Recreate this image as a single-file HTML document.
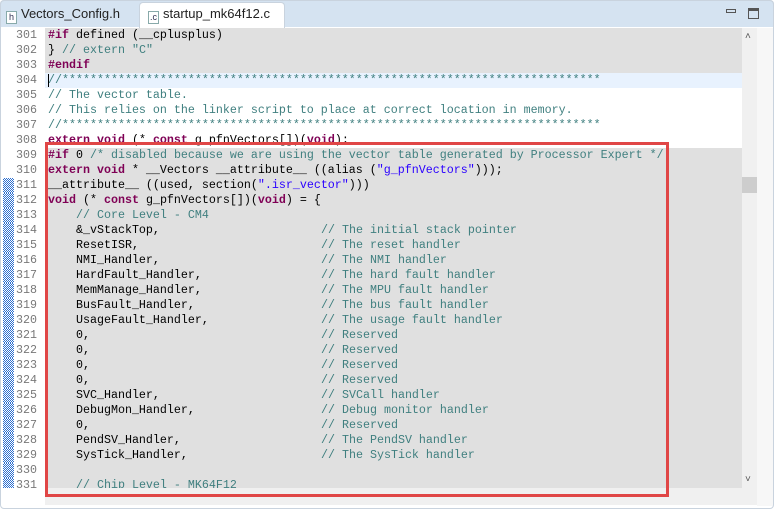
<!DOCTYPE html>
<html><head><style>
*{margin:0;padding:0;box-sizing:border-box}
body{width:774px;height:509px;background:#fff;position:relative;overflow:hidden;font-family:"Liberation Sans",sans-serif}
.tabbar{position:absolute;left:0;top:0;width:774px;height:27px;background:#d5e3f1;border:1px solid #c9d3de;border-bottom:none;border-radius:4px 4px 0 0}
.tab{position:absolute;top:3px;height:24px;font-size:13px;line-height:22px;color:#222}
.t1{left:6px}
.t2{left:139px;width:146px;background:#fff;border:1px solid #c9d3de;border-bottom:none;border-radius:4px 4px 0 0;padding-left:8px;top:2px;height:26px}
.ic{display:inline-block;width:11px;height:13px;border:1px solid #8aa;font-size:9px;line-height:11px;text-align:center;vertical-align:-2px;margin-right:4px;color:#335;background:#fff}
.gutter{position:absolute;left:0;top:28px;width:45px;height:460px;background:#fff}
.area{position:absolute;left:45px;top:28px;width:697px;height:460px;overflow:hidden;background:#fff}
.ln{position:absolute;left:0;width:37px;text-align:right;font-family:"Liberation Mono",monospace;font-size:11.67px;color:#787878;height:15px;line-height:15px}
.cb{position:absolute;left:3px;width:11px;height:15px;background:repeating-conic-gradient(#2d6fcf 0 25%,#fff 0 50%) 0 0/2px 2px}
.l{position:absolute;left:0;width:697px;height:15px;line-height:15px;font-family:"Liberation Mono",monospace;font-size:11.67px;white-space:pre;padding-left:3px;color:#000}
.g{background:#e0e0e0}.b{background:#e8f2fe}
.k{color:#7f0055;font-weight:bold}.c{color:#3f7f7f}.s{color:#2a00ff}
.cm{position:absolute;left:276px;color:#3f7f7f}
.red{position:absolute;left:45px;top:142px;width:624px;height:355px;border:3px solid #e04646}
.vs{position:absolute;left:742px;top:28px;width:15px;height:460px;background:#f0f0f0}
.hs{position:absolute;left:45px;top:488px;width:712px;height:17px;background:#f0f0f0}
.rside{position:absolute;left:757px;top:28px;width:16px;height:478px;background:#f7f7f7}
.frame{position:absolute;left:0;top:0;width:774px;height:509px;border:1px solid #c9d3de;border-radius:4px}
</style></head><body>
<div class="tabbar"></div>
<div class="tab t1"><span class="ic">h</span>Vectors_Config.h</div>
<div class="tab t2"><span class="ic">.c</span>startup_mk64f12.c <span style="color:#777;font-size:12px;margin-left:4px">⊠</span></div>
<div style="position:absolute;left:726px;top:9px;width:10px;height:4px;border:1px solid #555"></div>
<div style="position:absolute;left:748px;top:8px;width:11px;height:11px;border:1px solid #555;border-top-width:3px"></div>
<div class="gutter"></div>
<div class="vs"><div style="position:absolute;left:0;top:149px;width:15px;height:16px;background:#cdcdcd"></div><div style="position:absolute;left:3px;top:3px;font-size:10px;color:#555">˄</div><div style="position:absolute;left:3px;top:446px;font-size:10px;color:#555">˅</div></div>
<div class="hs"></div>
<div class="rside"></div>
<div class="area" id="a">
<div class="l g" style="top:0"><span class="k">#if</span> defined (__cplusplus)</div>
<div class="l g" style="top:15px">} <span class="c">// extern "C"</span></div>
<div class="l g" style="top:30px"><span class="k">#endif</span></div>
<div class="l b" style="top:45px"><span class="c">//*****************************************************************************</span></div>
<div class="l" style="top:60px"><span class="c">// The vector table.</span></div>
<div class="l" style="top:75px"><span class="c">// This relies on the linker script to place at correct location in memory.</span></div>
<div class="l" style="top:90px"><span class="c">//*****************************************************************************</span></div>
<div class="l" style="top:105px"><span class="k">extern void</span> (* <span class="k">const</span> g_pfnVectors[])(<span class="k">void</span>);</div>
<div class="l g" style="top:120px"><span class="k">#if</span> 0 <span class="c">/* disabled because we are using the vector table generated by Processor Expert */</span></div>
<div class="l g" style="top:135px"><span class="k">extern void</span> * __Vectors __attribute__ ((alias (<span class="s">"g_pfnVectors"</span>)));</div>
<div class="l g" style="top:150px">__attribute__ ((used, section(<span class="s">".isr_vector"</span>)))</div>
<div class="l g" style="top:165px"><span class="k">void</span> (* <span class="k">const</span> g_pfnVectors[])(<span class="k">void</span>) = {</div>
<div class="l g" style="top:180px">    <span class="c">// Core Level - CM4</span></div>
<div class="l g" style="top:195px">    &amp;_vStackTop,<span class="cm">// The initial stack pointer</span></div>
<div class="l g" style="top:210px">    ResetISR,<span class="cm">// The reset handler</span></div>
<div class="l g" style="top:225px">    NMI_Handler,<span class="cm">// The NMI handler</span></div>
<div class="l g" style="top:240px">    HardFault_Handler,<span class="cm">// The hard fault handler</span></div>
<div class="l g" style="top:255px">    MemManage_Handler,<span class="cm">// The MPU fault handler</span></div>
<div class="l g" style="top:270px">    BusFault_Handler,<span class="cm">// The bus fault handler</span></div>
<div class="l g" style="top:285px">    UsageFault_Handler,<span class="cm">// The usage fault handler</span></div>
<div class="l g" style="top:300px">    0,<span class="cm">// Reserved</span></div>
<div class="l g" style="top:315px">    0,<span class="cm">// Reserved</span></div>
<div class="l g" style="top:330px">    0,<span class="cm">// Reserved</span></div>
<div class="l g" style="top:345px">    0,<span class="cm">// Reserved</span></div>
<div class="l g" style="top:360px">    SVC_Handler,<span class="cm">// SVCall handler</span></div>
<div class="l g" style="top:375px">    DebugMon_Handler,<span class="cm">// Debug monitor handler</span></div>
<div class="l g" style="top:390px">    0,<span class="cm">// Reserved</span></div>
<div class="l g" style="top:405px">    PendSV_Handler,<span class="cm">// The PendSV handler</span></div>
<div class="l g" style="top:420px">    SysTick_Handler,<span class="cm">// The SysTick handler</span></div>
<div class="l g" style="top:435px"> </div>
<div class="l g" style="top:450px">    <span class="c">// Chip Level - MK64F12</span></div>
</div>
<div id="g" style="position:absolute;left:0;top:28px;width:45px;height:460px;overflow:hidden">
<script>
var h='';for(var i=0;i<31;i++){if(i>=10)h+='<div class="cb" style="top:'+(i*15)+'px"></div>';h+='<div class="ln" style="top:'+(i*15)+'px">'+(301+i)+'</div>';}
document.getElementById('g').innerHTML=h;
</script>
</div>
<div style="position:absolute;left:48px;top:74px;width:1px;height:13px;background:#000"></div>
<div class="red"></div>
<div class="frame"></div>
</body></html>
